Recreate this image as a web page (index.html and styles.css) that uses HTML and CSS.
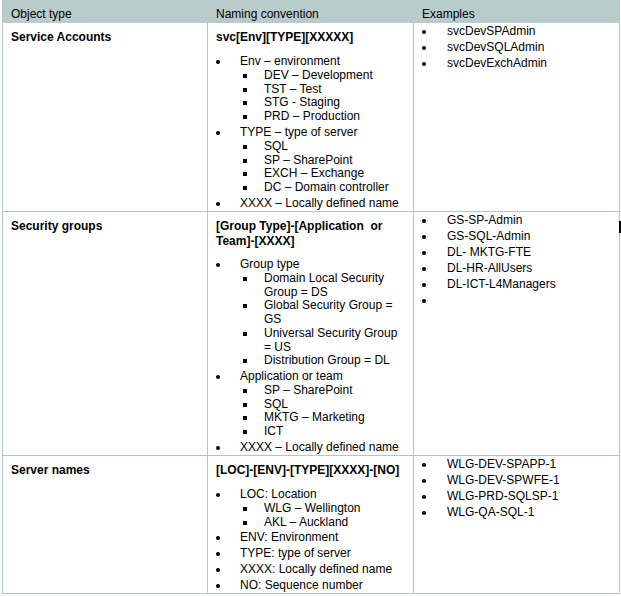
FILE: index.html
```html
<!DOCTYPE html>
<html>
<head>
<meta charset="utf-8">
<link rel="stylesheet" href="styles.css">
</head>
<body>
<table class="grid">
  <colgroup><col class="c1"><col class="c2"><col class="c3"></colgroup>
  <thead>
    <tr class="head"><th>Object type</th><th>Naming convention</th><th>Examples</th></tr>
  </thead>
  <tbody>
    <tr class="r1">
      <td class="type">Service Accounts</td>
      <td class="conv">
        <div class="title">svc[Env][TYPE][XXXXX]</div>
        <ul class="l1">
          <li><div>Env – environment
            <ul class="l2">
              <li><div>DEV – Development</div></li>
              <li><div>TST – Test</div></li>
              <li><div>STG - Staging</div></li>
              <li><div>PRD – Production</div></li>
            </ul></div></li>
          <li><div>TYPE – type of server
            <ul class="l2">
              <li><div>SQL</div></li>
              <li><div>SP – SharePoint</div></li>
              <li><div>EXCH – Exchange</div></li>
              <li><div>DC – Domain controller</div></li>
            </ul></div></li>
          <li><div>XXXX – Locally defined name</div></li>
        </ul>
      </td>
      <td class="exc">
        <ul class="ex">
          <li><div>svcDevSPAdmin</div></li>
          <li><div>svcDevSQLAdmin</div></li>
          <li><div>svcDevExchAdmin</div></li>
        </ul>
      </td>
    </tr>
    <tr class="r2">
      <td class="type">Security groups</td>
      <td class="conv">
        <div class="title">[Group Type]-[Application&nbsp; or Team]-[XXXX]</div>
        <ul class="l1">
          <li><div>Group type
            <ul class="l2">
              <li><div>Domain Local Security Group = DS</div></li>
              <li><div>Global Security Group = GS</div></li>
              <li><div>Universal Security Group = US</div></li>
              <li><div>Distribution Group = DL</div></li>
            </ul></div></li>
          <li><div>Application or team
            <ul class="l2">
              <li><div>SP – SharePoint</div></li>
              <li><div>SQL</div></li>
              <li><div>MKTG – Marketing</div></li>
              <li><div>ICT</div></li>
            </ul></div></li>
          <li><div>XXXX – Locally defined name</div></li>
        </ul>
      </td>
      <td class="exc">
        <ul class="ex">
          <li><div>GS-SP-Admin</div></li>
          <li><div>GS-SQL-Admin</div></li>
          <li><div>DL- MKTG-FTE</div></li>
          <li><div>DL-HR-AllUsers</div></li>
          <li><div>DL-ICT-L4Managers</div></li>
          <li><div>&nbsp;</div></li>
        </ul>
      </td>
    </tr>
    <tr class="r3">
      <td class="type">Server names</td>
      <td class="conv">
        <div class="title">[LOC]-[ENV]-[TYPE][XXXX]-[NO]</div>
        <ul class="l1">
          <li><div>LOC: Location
            <ul class="l2">
              <li><div>WLG – Wellington</div></li>
              <li><div>AKL – Auckland</div></li>
            </ul></div></li>
          <li><div>ENV: Environment</div></li>
          <li><div>TYPE: type of server</div></li>
          <li><div>XXXX: Locally defined name</div></li>
          <li><div>NO: Sequence number</div></li>
        </ul>
      </td>
      <td class="exc">
        <ul class="ex">
          <li><div>WLG-DEV-SPAPP-1</div></li>
          <li><div>WLG-DEV-SPWFE-1</div></li>
          <li><div>WLG-PRD-SQLSP-1</div></li>
          <li><div>WLG-QA-SQL-1</div></li>
        </ul>
      </td>
    </tr>
  </tbody>
</table>
<span class="caret"></span>
</body>
</html>
```
FILE: styles.css
```css
html, body {
  margin: 0;
  padding: 0;
  background: #fff;
}
body {
  position: relative;
  width: 621px;
  height: 596px;
  overflow: hidden;
  font-family: "Liberation Sans", Arial, sans-serif;
  font-size: 12px;
  color: #000;
}
.grid {
  margin-left: 2px;
  border-collapse: collapse;
  table-layout: fixed;
  width: 617px;
}
.c1 { width: 205px; }
.c2 { width: 206px; }
.c3 { width: 206px; }
.head { height: 22px; }
.r1 { height: 189px; }
.r2 { height: 244px; }
.r3 { height: 138px; }
.head th {
  background: #b9cccb;
  border: 1px solid #b9cccb;
  text-align: left;
  font-weight: normal;
  line-height: 15px;
  padding: 6px 8px 0 8px;
  vertical-align: top;
}
td {
  border: 1px solid #b6c4c4;
  vertical-align: top;
  padding: 7px 8px 0 8px;
  line-height: 15px;
}
td.exc {
  padding: 0 8px;
}
.type, .title {
  font-weight: bold;
}
ul {
  list-style: none;
  margin: 0;
  padding: 0;
}
.l1 {
  margin-top: 8px;
}
.r2 .l1 {
  margin-top: 7px;
}
.l1 > li, .ex > li {
  display: flex;
  line-height: 16px;
}
.l1 > li::before, .ex > li::before {
  content: "";
  flex: none;
  width: 4px;
  height: 4px;
  border-radius: 50%;
  background: #000;
  margin: 7px 20px 0 0;
}
.ex > li::before {
  margin-right: 21px;
}
.l2 {
  padding-left: 3px;
}
.l2 > li {
  display: flex;
  line-height: 13.7px;
}
.l2 > li::before {
  content: "";
  flex: none;
  width: 4px;
  height: 4px;
  background: #000;
  margin: 5px 17px 0 0;
}
.caret {
  position: absolute;
  left: 619px;
  top: 221px;
  width: 2px;
  height: 12px;
  background: #000;
}
```
